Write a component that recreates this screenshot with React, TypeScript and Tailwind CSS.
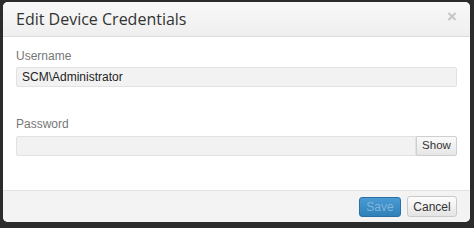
import React from "react";

export default function App() {
  return (
    <div className="w-[474px] h-[228px] bg-[#2b2b2b] pt-[2px] pl-[3px]">
      <div className="w-[467px] h-[220px] rounded-[5px] overflow-hidden bg-white flex flex-col">
        <div className="h-[35px] shrink-0 bg-gradient-to-b from-[#f8f8f8] to-[#efefef] border-b border-[#dcdcdc] flex items-center justify-between pl-[13px] pr-[13px]">
          <span className="text-[16px] text-[#333] font-['Open_Sans',sans-serif] leading-none">Edit Device Credentials</span>
          <span className="text-[17px] text-[#c4c4c4] font-bold font-['Liberation_Sans',sans-serif] leading-none -mt-[5px]">×</span>
        </div>
        <div className="flex-1 px-[13px] pt-[12px] font-['Liberation_Sans',Arial,sans-serif]">
          <div className="text-[12px] text-[#777] leading-[15px]">Username</div>
          <div className="mt-[3px] h-[20px] bg-[#f2f2f2] border border-[#e2e2e2] rounded-[2px] flex items-center px-[5px] text-[12px] text-[#222]">SCM\Administrator</div>
          <div className="mt-[30px] text-[12px] text-[#777] leading-[15px]">Password</div>
          <div className="mt-[4px] flex h-[20px]">
            <div className="flex-1 bg-[#f2f2f2] border border-[#e2e2e2] rounded-l-[2px]"></div>
            <button className="w-[41px] bg-gradient-to-b from-[#fafafa] to-[#e6e6e6] border border-[#cfcfcf] rounded-r-[2px] text-[11.5px] text-[#333] flex items-center justify-center">Show</button>
          </div>
        </div>
        <div className="h-[32px] shrink-0 bg-[#f3f3f3] border-t border-[#e2e2e2] flex items-center justify-end gap-[6px] pr-[13px] font-['Liberation_Sans',Arial,sans-serif]">
          <button className="w-[42px] h-[20px] rounded-[3px] bg-gradient-to-b from-[#4a9ad4] to-[#2f7fb8] border border-[#2a6fa3] text-[12px] text-[#7fb6de] flex items-center justify-center">Save</button>
          <button className="w-[50px] h-[21px] rounded-[3px] bg-gradient-to-b from-[#fdfdfd] to-[#e4e4e4] border border-[#c9c9c9] text-[12px] text-[#333] flex items-center justify-center">Cancel</button>
        </div>
      </div>
    </div>
  );
}
